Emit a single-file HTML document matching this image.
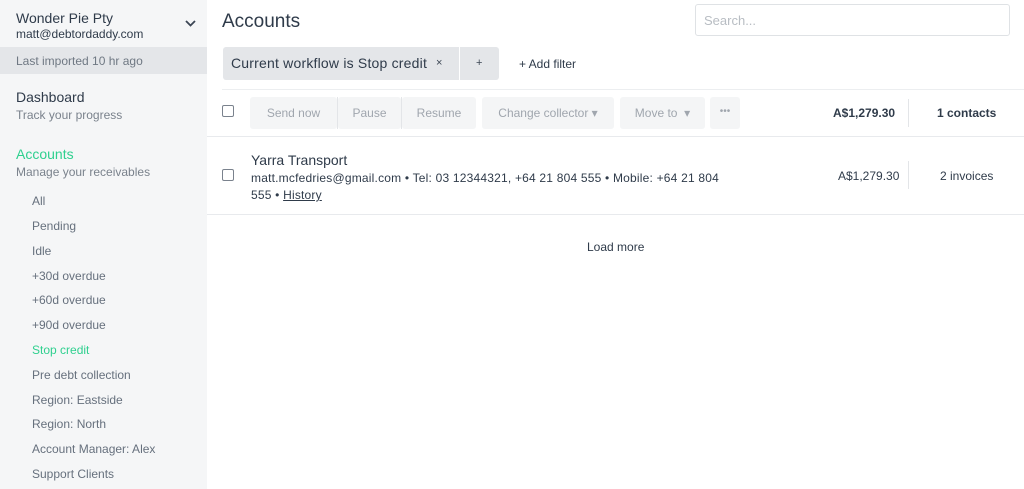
<!DOCTYPE html>
<html><head><meta charset="utf-8"><style>
*{margin:0;padding:0;box-sizing:border-box}
body{width:1024px;height:489px;overflow:hidden;font-family:"Liberation Sans",sans-serif;background:#fff;position:relative;color:#2f3b4a}
.a{position:absolute;white-space:nowrap}
#side{position:absolute;left:0;top:0;width:207px;height:489px;background:#f5f6f7}
.nav{font-size:12px;color:#66707d;left:32px}
.cb{position:absolute;width:12px;height:12px;border:1.3px solid #7a828d;border-radius:2px;background:#fff}
.btn{position:absolute;top:97px;height:32px;background:#f4f5f6;border-radius:3px;color:#a0a6ae;font-size:12px;line-height:32px;text-align:center}
.sep{position:absolute;width:1px;background:#e3e5e8}
</style></head><body>
<div id="side">
 <div class="a" style="left:16px;top:10px;font-size:14px;color:#2f3b4a">Wonder Pie Pty</div>
 <div class="a" style="left:16px;top:27px;font-size:12px;color:#2f3b4a">matt@debtordaddy.com</div>
 <svg class="a" style="left:185px;top:20px" width="11" height="7"><path d="M1 1 L5.5 5.5 L10 1" fill="none" stroke="#3c4654" stroke-width="1.8"/></svg>
 <div class="a" style="left:0;top:47px;width:207px;height:27px;background:#e4e6e9"></div>
 <div class="a" style="left:16px;top:54px;font-size:12px;color:#6f7883">Last imported 10 hr ago</div>
 <div class="a" style="left:16px;top:89px;font-size:14px;color:#2f3b4a">Dashboard</div>
 <div class="a" style="left:16px;top:108px;font-size:12px;color:#7a828c">Track your progress</div>
 <div class="a" style="left:16px;top:146px;font-size:14px;color:#2fd08f">Accounts</div>
 <div class="a" style="left:16px;top:165px;font-size:12px;color:#7a828c">Manage your receivables</div>
 <div class="a nav" style="top:194px">All</div>
 <div class="a nav" style="top:219px">Pending</div>
 <div class="a nav" style="top:244px">Idle</div>
 <div class="a nav" style="top:269px">+30d overdue</div>
 <div class="a nav" style="top:293px">+60d overdue</div>
 <div class="a nav" style="top:318px">+90d overdue</div>
 <div class="a nav" style="top:343px;color:#2fd08f">Stop credit</div>
 <div class="a nav" style="top:368px">Pre debt collection</div>
 <div class="a nav" style="top:393px">Region: Eastside</div>
 <div class="a nav" style="top:417px">Region: North</div>
 <div class="a nav" style="top:442px">Account Manager: Alex</div>
 <div class="a nav" style="top:467px">Support Clients</div>
</div>
<div class="a" style="left:222px;top:11px;font-size:19px;color:#2f3b4a">Accounts</div>
<div class="a" style="left:695px;top:4px;width:315px;height:32px;border:1px solid #dfe2e5;border-radius:3px;font-size:13px;color:#b8bdc3;padding:8px 8px">Search...</div>
<div class="a" style="left:223px;top:47px;width:236px;height:33px;background:#e4e6e9;border-radius:3px 0 0 3px"></div>
<div class="a" style="left:460px;top:47px;width:39px;height:33px;background:#e4e6e9;border-radius:0 3px 3px 0"></div>
<div class="a" style="left:231px;top:55px;font-size:14px;color:#2f3b4a;letter-spacing:0.2px">Current workflow is Stop credit</div>
<div class="a" style="left:436px;top:57px;font-size:11px;color:#3c4654">×</div>
<div class="a" style="left:476px;top:57px;font-size:11px;color:#3c4654">+</div>
<div class="a" style="left:519px;top:57px;font-size:12px;color:#2f3b4a">+ Add filter</div>
<div class="a" style="left:222px;top:89px;width:802px;height:1px;background:#eceef0"></div>
<div class="cb" style="left:222px;top:105px"></div>
<div class="btn" style="left:250px;width:87px">Send now</div>
<div class="sep" style="left:337px;top:97px;height:32px"></div>
<div class="btn" style="left:338px;width:63px">Pause</div>
<div class="sep" style="left:401px;top:97px;height:32px"></div>
<div class="btn" style="left:402px;width:74px">Resume</div>
<div class="btn" style="left:482px;width:132px">Change collector ▾</div>
<div class="btn" style="left:620px;width:85px">Move to &nbsp;▾</div>
<div class="btn" style="left:710px;width:30px;font-size:10px;line-height:30px">•••</div>
<div class="a" style="left:833px;top:106px;font-size:12px;font-weight:bold;color:#2f3b4a">A$1,279.30</div>
<div class="sep" style="left:908px;top:99px;height:28px"></div>
<div class="a" style="left:937px;top:106px;font-size:12px;font-weight:bold;color:#2f3b4a">1 contacts</div>
<div class="a" style="left:207px;top:136px;width:817px;height:1px;background:#e8eaed"></div>
<div class="cb" style="left:222px;top:169px"></div>
<div class="a" style="left:251px;top:152px;font-size:14px;color:#2f3b4a">Yarra Transport</div>
<div class="a" style="left:251px;top:170px;font-size:12px;color:#2f3b4a;line-height:17px;letter-spacing:0.2px">matt.mcfedries@gmail.com • Tel: 03 12344321, +64 21 804 555 • Mobile: +64 21 804<br>555 • <u>History</u></div>
<div class="a" style="left:838px;top:169px;font-size:12px;color:#2f3b4a">A$1,279.30</div>
<div class="sep" style="left:908px;top:161px;height:28px"></div>
<div class="a" style="left:940px;top:169px;font-size:12px;color:#2f3b4a">2 invoices</div>
<div class="a" style="left:207px;top:214px;width:817px;height:1px;background:#e8eaed"></div>
<div class="a" style="left:587px;top:240px;font-size:12px;color:#2f3b4a">Load more</div>
</body></html>
